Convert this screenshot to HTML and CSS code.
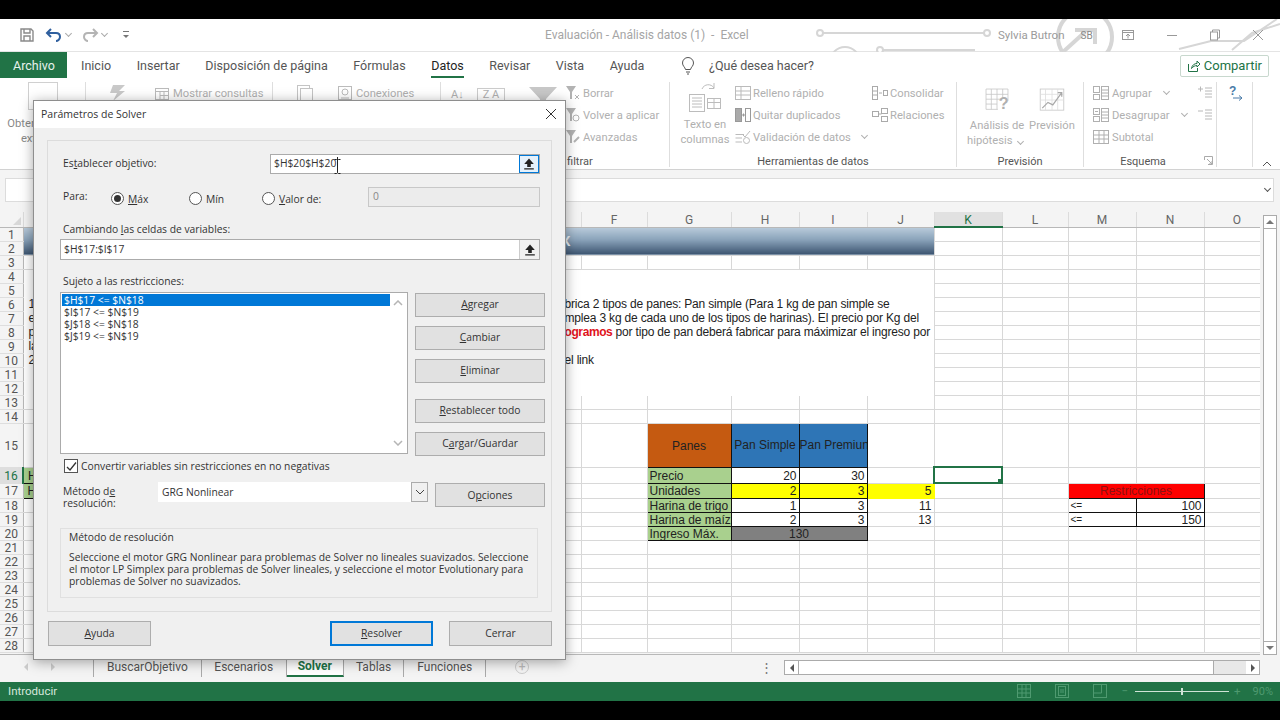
FILE: index.html
```html
<!DOCTYPE html>
<html lang="es">
<head>
    <meta charset="UTF-8">
    <meta name="viewport" content="width=device-width, initial-scale=1.0">
    <title>Evaluación - Análisis datos (1) - Excel</title>
    <link rel="stylesheet" href="styles.css">
</head>
<body>

<div class="page">
    <div class="letterbox-top"></div>

    <!-- Title bar -->
    <header class="titlebar">
        <svg class="circuit" width="465" height="33" viewBox="815 19 465 33" fill="none" stroke="#d6d6d6" stroke-width="2">
            <path d="M820 33H985"/><circle cx="820" cy="33" r="3" fill="#fff"/><circle cx="987" cy="33" r="3" fill="#fff"/>
            <path d="M880 50H975"/><circle cx="880" cy="50" r="3" fill="#fff"/>
            <circle cx="845" cy="62" r="15"/>
            <circle cx="1085" cy="37" r="27" stroke-width="4"/>
            <path d="M1063 52L1085 32M1075 30H1095V44" stroke-width="4"/>
            <path d="M1179 49L1211 41H1244L1277 19M1232 50L1252 33L1280 24"/>
        </svg>
        <div class="qat">
            <svg width="16" height="16" viewBox="0 0 16 16" fill="none" stroke="#8a8a8a" stroke-width="1.4"><path d="M2 2H12L14 4V14H2Z"/><path d="M5 2V6H11V2M5 14V9H11V14"/></svg>
            <svg class="qat-undo" width="18" height="16" viewBox="0 0 18 16" fill="none" stroke="#2f5f9e" stroke-width="2"><path d="M6 2L2 6L6 10M2 6H11C14 6 15 8 15 10C15 12 13 14 11 14"/></svg>
            <span class="chev qat-drop"></span>
            <svg class="qat-redo" width="18" height="16" viewBox="0 0 18 16" fill="none" stroke="#b4b4b4" stroke-width="2"><path d="M12 2L16 6L12 10M16 6H7C4 6 3 8 3 10C3 12 5 14 7 14"/></svg>
            <span class="chev qat-drop"></span>
            <svg class="qat-custom" width="8" height="10" viewBox="0 0 8 10" fill="#777"><rect x="1" y="1" width="6" height="1"/><path d="M1 5H7L4 8Z"/></svg>
        </div>
        <div class="doc-title">Evaluación - Análisis datos (1)  -  Excel</div>
        <div class="account">
            <span class="account-name">Sylvia Butron</span>
            <span class="account-badge">SB</span>
        </div>
        <div class="window-btns">
            <svg width="14" height="12" viewBox="0 0 14 12" fill="none" stroke="#999"><rect x="1.5" y="1.5" width="11" height="9"/><path d="M1.5 3.5H12.5M7 9.5V5.5M5 7L7 5L9 7"/></svg>
            <svg width="12" height="12" viewBox="0 0 12 12" stroke="#999"><path d="M1 6.5H11"/></svg>
            <svg width="12" height="12" viewBox="0 0 12 12" fill="none" stroke="#999"><rect x="1.5" y="3" width="7" height="8"/><path d="M3.5 3V1H10.5V9H8.5"/></svg>
            <svg width="12" height="12" viewBox="0 0 12 12" stroke="#999"><path d="M1 1L11 11M11 1L1 11"/></svg>
        </div>
    </header>

    <!-- Ribbon tabs -->
    <nav class="tabs">
        <span class="tab-file">Archivo</span>
        <span class="tab">Inicio</span>
        <span class="tab">Insertar</span>
        <span class="tab">Disposición de página</span>
        <span class="tab">Fórmulas</span>
        <span class="tab tab-active">Datos</span>
        <span class="tab">Revisar</span>
        <span class="tab">Vista</span>
        <span class="tab">Ayuda</span>
        <svg class="tab-bulb" width="14" height="18" viewBox="0 0 14 18" fill="none" stroke="#555"><path d="M4.5 12.5C4 10 1.5 9 1.5 6A5.5 5.5 0 0 1 12.5 6C12.5 9 10 10 9.5 12.5ZM5 15H9M6 17H8"/></svg>
        <span class="tab-search">¿Qué desea hacer?</span>
        <span class="share">
            <svg width="14" height="14" viewBox="0 0 14 14" fill="none" stroke="#217346"><path d="M1.5 5V12.5H10.5V9M4.5 9.5C5 6 7.5 4.5 10 4.5V2L13 5L10 8V6.5C8 6.5 6 7.5 4.5 9.5Z"/></svg>
            Compartir
        </span>
    </nav>

    <!-- Ribbon -->
    <section class="ribbon">
        <div class="group g-get">
            <div class="group-body">
                <div class="big-btn">
                    <span class="get-icon"></span>
                    <span>Obtener datos</span>
                    <span>externos</span>
                </div>
            </div>
        </div>
        <div class="group g-queries">
            <div class="group-body top-row">
                <svg class="ico" width="24" height="16" viewBox="0 0 24 16" fill="#c9c9c9"><path d="M6 0H18L12 6H18L6 16L10 8H3Z"/></svg>
                <svg class="ico" width="14" height="14" viewBox="0 0 14 14" fill="none" stroke="#bbb"><rect x="0.5" y="1.5" width="13" height="11"/><path d="M0.5 4.5H13.5M5 4.5V12.5M9 4.5V12.5M5 8.5H13.5"/></svg>
                <span>Mostrar consultas</span>
            </div>
        </div>
        <div class="group g-links">
            <div class="group-body top-row">
                <svg class="ico" width="18" height="16" viewBox="0 0 18 16" fill="none" stroke="#c4c4c4"><rect x="1.5" y="0.5" width="12" height="15"/><rect x="4.5" y="3.5" width="12" height="12" fill="#fff"/></svg>
                <svg class="ico" width="14" height="14" viewBox="0 0 14 14" fill="none" stroke="#bbb"><rect x="0.5" y="0.5" width="13" height="13"/><circle cx="7" cy="6" r="3"/><path d="M3 12H11"/></svg>
                <span>Conexiones</span>
            </div>
        </div>
        <div class="group g-sort">
            <div class="group-body sort-body">
                <div class="sort-keys">
                    <span class="sort-a">A↓</span>
                    <span class="sort-za">Z A</span>
                </div>
                <svg class="funnel" width="28" height="26" viewBox="0 0 28 26" fill="#c8c8c8"><path d="M0 0H28L17 12V26H11V12Z"/></svg>
                <div class="stack">
                    <div class="stack-row"><svg width="14" height="14" viewBox="0 0 14 14" fill="#b3b3b3"><path d="M0 0H10L6 6V13H4V6Z"/><path d="M9 9L13 13M13 9L9 13" stroke="#b3b3b3"/></svg>Borrar</div>
                    <div class="stack-row"><svg width="14" height="14" viewBox="0 0 14 14" fill="#b3b3b3"><path d="M0 0H10L6 6V13H4V6Z"/><circle cx="10" cy="10" r="3" fill="none" stroke="#b3b3b3"/></svg>Volver a aplicar</div>
                    <div class="stack-row"><svg width="14" height="14" viewBox="0 0 14 14" fill="#b3b3b3"><path d="M0 0H10L6 6V13H4V6Z"/><path d="M8 12L13 7" stroke="#b3b3b3" stroke-width="2"/></svg>Avanzadas</div>
                </div>
            </div>
            <div class="group-label">Ordenar y filtrar</div>
        </div>
        <div class="group g-tools">
            <div class="group-body tools-body">
                <div class="big-btn big-text">
                    <svg width="34" height="32" viewBox="0 0 34 32" fill="none" stroke="#bcbcbc"><path d="M14 7C16 2 23 1 26 6M26 1V6.5H21"/><rect x="1.5" y="12.5" width="15" height="17"/><path d="M4 16H14M4 19H14M4 22H14M4 25H14"/><rect x="19.5" y="16.5" width="13" height="10"/><path d="M19.5 20.5H32.5M26 16.5V26.5"/></svg>
                    <span>Texto en</span>
                    <span>columnas</span>
                </div>
                <div class="stack stack-tools">
                    <div class="stack-row"><svg width="16" height="14" viewBox="0 0 16 14" fill="none" stroke="#bbb"><rect x="0.5" y="0.5" width="15" height="13"/><path d="M0.5 5H15.5M0.5 9H15.5M6 0.5V13.5"/></svg>Relleno rápido</div>
                    <div class="stack-row"><svg width="16" height="14" viewBox="0 0 16 14" fill="none" stroke="#999"><rect x="0.5" y="0.5" width="6" height="13" fill="#aaa"/><rect x="10.5" y="0.5" width="5" height="13"/><path d="M7 7H10M8.5 5.5V8.5"/></svg>Quitar duplicados</div>
                    <div class="stack-row"><svg width="16" height="14" viewBox="0 0 16 14" fill="none" stroke="#bbb"><path d="M0.5 4.5H9M0.5 8H7M0.5 12H7M8 5L10 7L15 1"/><circle cx="11.5" cy="10.5" r="3"/></svg>Validación de datos<span class="chev"></span></div>
                </div>
                <div class="stack stack-links">
                    <div class="stack-row"><svg width="16" height="14" viewBox="0 0 16 14" fill="none" stroke="#aaa"><rect x="0.5" y="0.5" width="5" height="13"/><path d="M0.5 5H5.5M0.5 9H5.5M7 7H10"/><rect x="11.5" y="4.5" width="4" height="5"/></svg>Consolidar</div>
                    <div class="stack-row"><svg width="16" height="14" viewBox="0 0 16 14" fill="none" stroke="#aaa"><rect x="0.5" y="3.5" width="6" height="5"/><rect x="9.5" y="0.5" width="6" height="5"/><rect x="9.5" y="8.5" width="6" height="5"/><path d="M6.5 6H9.5"/></svg>Relaciones</div>
                </div>
            </div>
            <div class="group-label">Herramientas de datos</div>
        </div>
        <div class="group g-forecast">
            <div class="group-body forecast-body">
                <div class="big-btn big-whatif">
                    <svg viewBox="0 0 32 32" fill="none" stroke="#c6c6c6"><path d="M2.5 2.5H29.5V17M2.5 2.5V27.5H17M2.5 9H29.5M2.5 15H22M2.5 21H16M9 2.5V27.5M16 2.5V27.5M23 2.5V13"/><text class="whatif-mark" x="18" y="27">?</text></svg>
                    <span>Análisis de</span>
                    <span class="big-second">hipótesis<span class="chev"></span></span>
                </div>
                <div class="big-btn big-fc">
                    <svg viewBox="0 0 32 32" fill="none" stroke="#c6c6c6"><rect x="1.5" y="2.5" width="29" height="26"/><path d="M1.5 9H30.5M8 2.5V28.5M16 2.5V28.5M23 2.5V28.5M1.5 16H30.5" stroke="#dedede"/><path d="M4 26L11 19L17 22L28 7M23 7H28V12" stroke="#a8a8a8" stroke-width="1.5"/></svg>
                    <span>Previsión</span>
                </div>
            </div>
            <div class="group-label">Previsión</div>
        </div>
        <div class="group g-outline">
            <div class="group-body outline-body">
                <div class="stack">
                    <div class="stack-row"><svg width="16" height="14" viewBox="0 0 16 14" fill="none" stroke="#b0b0b0"><rect x="0.5" y="0.5" width="6" height="6"/><rect x="0.5" y="8.5" width="6" height="5"/><rect x="8.5" y="0.5" width="7" height="13"/><path d="M8.5 4H15.5M8.5 7H15.5M8.5 10H15.5"/></svg>Agrupar<span class="chev"></span></div>
                    <div class="stack-row"><svg width="16" height="14" viewBox="0 0 16 14" fill="none" stroke="#b0b0b0"><rect x="0.5" y="0.5" width="6" height="6"/><rect x="0.5" y="8.5" width="6" height="5"/><rect x="8.5" y="0.5" width="7" height="13"/><path d="M8.5 4H15.5M8.5 7H15.5M8.5 10H15.5M2 3.5H5"/></svg>Desagrupar<span class="chev"></span></div>
                    <div class="stack-row"><svg width="16" height="14" viewBox="0 0 16 14" fill="none" stroke="#b0b0b0"><rect x="0.5" y="0.5" width="15" height="13"/><path d="M0.5 5H15.5M0.5 9H15.5M6 0.5V13.5M11 0.5V13.5"/></svg>Subtotal</div>
                </div>
                <div class="detail-btns">
                    <svg width="16" height="14" viewBox="0 0 16 14" fill="none" stroke="#b8b8b8"><path d="M1 3H6M3.5 0.5V5.5M8 2H15M8 5H15M8 8H15M8 11H15"/></svg>
                    <svg width="16" height="14" viewBox="0 0 16 14" fill="none" stroke="#b8b8b8"><path d="M1 3H6M8 2H15M8 5H15M8 8H15M8 11H15"/></svg>
                </div>
            </div>
            <div class="group-label group-label-launcher">Esquema
                <svg class="launcher" width="9" height="9" viewBox="0 0 9 9" fill="none" stroke="#aaa"><path d="M0.5 4V0.5H8.5V8.5H4M3 3L8 8M8 5V8H5"/></svg>
            </div>
        </div>
        <div class="group g-solver">
            <div class="group-body solver-body">
                <svg width="16" height="18" viewBox="0 0 16 18"><text class="solver-mark" x="1" y="11">?</text><path d="M5 14H14M11 11.5L14 14L11 16.5" fill="none" stroke="#4a7ba8"/></svg>
            </div>
        </div>
        <svg class="collapse" width="10" height="6" viewBox="0 0 10 6" fill="none" stroke="#555"><path d="M1 5L5 1L9 5"/></svg>
    </section>

    <!-- Formula bar -->
    <div class="formula-strip">
        <div class="formula-input"><span class="chev formula-chev"></span></div>
    </div>

    <!-- Worksheet, rows are filled in by script.js -->
    <main class="sheet-wrap">
        <div class="sheet">
            <table class="grid" id="grid">
                <colgroup>
                    <col class="col-rowhead">
                    <col class="col-a"><col class="col-b"><col class="col-c"><col class="col-d"><col class="col-e">
                    <col class="col-f"><col class="col-g"><col class="col-h"><col class="col-i"><col class="col-j">
                    <col class="col-k"><col class="col-l"><col class="col-m"><col class="col-n"><col class="col-o">
                </colgroup>
                <tbody id="grid-body"></tbody>
            </table>
        </div>
        <div class="vscroll">
            <span class="vs-btn"><i class="tri-up"></i></span>
            <span class="vs-thumb"></span>
            <span class="vs-btn"><i class="tri-down"></i></span>
        </div>
    </main>

    <!-- Sheet tabs -->
    <div class="sheetbar">
        <div class="sheet-nav"><i class="tri-left"></i><i class="tri-right"></i></div>
        <div class="sheet-tabs">
            <span class="sheet-tab">BuscarObjetivo</span>
            <span class="sheet-tab">Escenarios</span>
            <span class="sheet-tab sheet-tab-active">Solver</span>
            <span class="sheet-tab">Tablas</span>
            <span class="sheet-tab">Funciones</span>
        </div>
        <span class="sheet-add">+</span>
        <span class="sheet-dots">⋮</span>
        <div class="hscroll">
            <span class="hs-btn"><i class="tri-left dark"></i></span>
            <span class="hs-thumb"></span>
            <span class="hs-track"></span>
            <span class="hs-btn"><i class="tri-right dark"></i></span>
        </div>
    </div>

    <!-- Status bar -->
    <footer class="statusbar">
        <span>Introducir</span>
        <div class="status-right">
            <svg width="14" height="14" viewBox="0 0 14 14" fill="none" stroke="#4f9a70"><rect x="0.5" y="0.5" width="13" height="13"/><path d="M0.5 5H13.5M0.5 9H13.5M5 0.5V13.5M9 0.5V13.5"/></svg>
            <svg width="14" height="14" viewBox="0 0 14 14" fill="none" stroke="#4f9a70"><rect x="0.5" y="0.5" width="13" height="13"/><rect x="3.5" y="2.5" width="7" height="9"/><path d="M5 6H9M5 8H9"/></svg>
            <svg width="14" height="14" viewBox="0 0 14 14" fill="none" stroke="#4f9a70"><rect x="0.5" y="0.5" width="13" height="13"/><path d="M0.5 9H8.5V0.5"/></svg>
            <span class="zoom-minus">−</span>
            <span class="zoom-slider"><i></i></span>
            <span class="zoom-plus">+</span>
            <span class="zoom-level">90%</span>
        </div>
    </footer>

    <div class="letterbox-bottom"></div>

    <!-- Solver dialog -->
    <div class="dialog">
        <div class="dialog-title">
            <span>Parámetros de Solver</span>
            <svg width="12" height="12" viewBox="0 0 12 12" stroke="#333"><path d="M1 1L11 11M11 1L1 11"/></svg>
        </div>
        <div class="panel">
            <div class="row-objective">
                <label class="lbl lbl-objective">Es<u>t</u>ablecer objetivo:</label>
                <div class="ref-input ref-objective">
                    <span class="ref-text">$H$20$H$20<i class="caret"></i></span>
                    <span class="ref-btn ref-btn-focus">
                        <svg viewBox="0 0 10 10" fill="#222"><path d="M5 0.5L9 5H6.5V7.5H3.5V5H1ZM1 8.5H9V9.5H1Z"/></svg>
                    </span>
                </div>
            </div>
            <div class="row-para">
                <label class="lbl lbl-para">Para:</label>
                <label class="radio radio-max"><span class="radio-dot checked"></span><span><u>M</u>áx</span></label>
                <label class="radio radio-min"><span class="radio-dot"></span><span>Mín</span></label>
                <label class="radio radio-val"><span class="radio-dot"></span><span><u>V</u>alor de:</span></label>
                <div class="value-input">0</div>
            </div>
            <label class="lbl lbl-block lbl-vars">Cambiando <u>l</u>as celdas de variables:</label>
            <div class="ref-input ref-vars">
                <span class="ref-text">$H$17:$I$17</span>
                <span class="ref-btn">
                    <svg viewBox="0 0 10 10" fill="#222"><path d="M5 0.5L9 5H6.5V7.5H3.5V5H1ZM1 8.5H9V9.5H1Z"/></svg>
                </span>
            </div>
            <label class="lbl lbl-block lbl-subject">Su<u>j</u>eto a las restricciones:</label>
            <div class="row-constraints">
                <div class="listbox">
                    <ul class="list-items">
                        <li class="selected">$H$17 &lt;= $N$18</li>
                        <li>$I$17 &lt;= $N$19</li>
                        <li>$J$18 &lt;= $N$18</li>
                        <li>$J$19 &lt;= $N$19</li>
                    </ul>
                    <div class="list-scroll">
                        <svg width="10" height="6" viewBox="0 0 10 6" fill="none" stroke="#b5b5b5" stroke-width="1.5"><path d="M1 5L5 1L9 5"/></svg>
                        <svg width="10" height="6" viewBox="0 0 10 6" fill="none" stroke="#b5b5b5" stroke-width="1.5"><path d="M1 1L5 5L9 1"/></svg>
                    </div>
                </div>
                <div class="side-btns">
                    <button class="btn"><u>A</u>gregar</button>
                    <button class="btn"><u>C</u>ambiar</button>
                    <button class="btn"><u>E</u>liminar</button>
                    <button class="btn btn-gap"><u>R</u>establecer todo</button>
                    <button class="btn">C<u>a</u>rgar/Guardar</button>
                </div>
            </div>
            <label class="check-row">
                <span class="checkbox">
                    <svg width="11" height="11" viewBox="0 0 11 11" fill="none" stroke="#333" stroke-width="1.3"><path d="M1 6L4 9L10 1.5"/></svg>
                </span>
                Convertir variables sin restricciones en no negativas
            </label>
            <div class="row-method">
                <label class="lbl lbl-method">Método d<u>e</u><br>resolución:</label>
                <div class="select">
                    <span>GRG Nonlinear</span>
                    <span class="select-btn">
                        <svg width="10" height="6" viewBox="0 0 10 6" fill="none" stroke="#444"><path d="M1 1L5 5L9 1"/></svg>
                    </span>
                </div>
                <button class="btn btn-options">O<u>p</u>ciones</button>
            </div>
            <div class="method-box">
                <div class="method-title">Método de resolución</div>
                <p class="method-text">Seleccione el motor GRG Nonlinear para problemas de Solver no lineales suavizados. Seleccione el motor LP Simplex para problemas de Solver lineales, y seleccione el motor Evolutionary para problemas de Solver no suavizados.</p>
            </div>
        </div>
        <div class="dialog-footer">
            <button class="btn btn-foot"><u>A</u>yuda</button>
            <button class="btn btn-foot btn-default"><u>R</u>esolver</button>
            <button class="btn btn-foot">Cerrar</button>
        </div>
        <svg class="ibeam" width="7" height="15" viewBox="0 0 7 15" fill="none" stroke="#222"><path d="M0.5 0.5H2.5L3.5 1.5L4.5 0.5H6.5M3.5 1.5V13.5M0.5 14.5H2.5L3.5 13.5L4.5 14.5H6.5"/></svg>
    </div>
</div>

<script src="script.js"></script>
</body>
</html>
```

FILE: styles.css
```css
* {
    box-sizing: border-box;
}

body {
    margin: 0;
    background-color: #000;
    font-family: Roboto, "Liberation Sans", sans-serif;
    color: #444;
}

button {
    font: inherit;
}

.page {
    position: relative;
    display: flex;
    flex-direction: column;
    width: 1280px;
    height: 720px;
    overflow: hidden;
}

.letterbox-top {
    height: 19px;
    background-color: #000;
}

.letterbox-bottom {
    flex: 1;
    background-color: #000;
}

.chev {
    display: inline-block;
    width: 5px;
    height: 5px;
    margin: -3px 0 0 9px;
    border-right: 1px solid currentColor;
    border-bottom: 1px solid currentColor;
    transform: rotate(45deg);
}

/* Title bar */
.titlebar {
    position: relative;
    display: flex;
    align-items: center;
    height: 33px;
    padding-left: 19px;
    background-color: #fff;
    border-bottom: 1px solid #e4e4e4;
    font-size: 12px;
}

.circuit {
    position: absolute;
    top: 0;
    left: 815px;
}

.qat {
    position: relative;
    display: flex;
    align-items: center;
    width: 526px;
}

.qat-undo {
    margin-left: 10px;
}

.qat-drop {
    margin: -3px 0 0 3px;
    color: #aaa;
}

.qat-redo {
    margin-left: 10px;
}

.qat-custom {
    margin-left: 15px;
}

.doc-title {
    position: relative;
    width: 453px;
    color: #a5a5a5;
    white-space: pre;
}

.account {
    position: relative;
    display: flex;
    align-items: center;
    width: 123px;
    color: #9b9b9b;
}

.account-name {
    font-size: 11.5px;
}

.account-badge {
    margin-left: 16px;
    color: #888;
    font-size: 10px;
}

.window-btns {
    position: relative;
    display: flex;
    align-items: center;
    gap: 31px;
}

/* Ribbon tabs */
.tabs {
    display: flex;
    align-items: center;
    height: 26px;
    padding-top: 1px;
    background-color: #fff;
    font-size: 12.5px;
    color: #555;
}

.tab-file {
    display: flex;
    align-items: center;
    align-self: stretch;
    width: 67px;
    margin-top: -1px;
    padding-left: 13px;
    background-color: #217346;
    color: #e8f2ec;
}

.tab {
    position: relative;
    padding: 0 12.8px;
}

.tab:nth-child(2) {
    padding-left: 14px;
}

.tab-active {
    color: #222;
}

.tab-active::after {
    content: '';
    position: absolute;
    left: 13px;
    right: 13px;
    bottom: -6px;
    height: 3px;
    background-color: #217346;
}

.tab-bulb {
    margin-left: 24px;
}

.tab-search {
    margin-left: 14px;
}

.share {
    display: flex;
    align-items: center;
    gap: 3px;
    margin-left: auto;
    margin-right: 11px;
    height: 22px;
    padding: 0 6px;
    border: 1px solid #c8d8ce;
    border-radius: 2px;
    color: #217346;
    font-size: 13px;
}

/* Ribbon */
.ribbon {
    position: relative;
    display: flex;
    height: 92px;
    padding-top: 4px;
    background-color: #fff;
    border-bottom: 1px solid #d2d2d2;
    font-size: 11.2px;
    color: #b0b0b0;
}

.group {
    display: flex;
    flex-direction: column;
    border-right: 1px solid #dedede;
    height: 85px;
}

.g-get { width: 86px; color: #888; }
.g-queries { width: 187px; }
.g-links { width: 168px; }
.g-sort { width: 229px; }
.g-tools { width: 287px; }
.g-forecast { width: 127px; }
.g-outline { width: 133px; }
.g-solver { width: 36px; }

.group-body {
    display: flex;
    flex: none;
    height: 71px;
}

.group-label {
    height: 14px;
    line-height: 18px;
    text-align: center;
    color: #555;
    font-size: 11px;
}

.group-label-launcher {
    position: relative;
    padding-right: 14px;
}

.launcher {
    position: absolute;
    top: 3px;
    right: 3px;
}

.big-btn {
    display: flex;
    flex-direction: column;
    align-items: center;
    line-height: 15px;
}

.g-get .big-btn {
    width: 100%;
}

.get-icon {
    width: 30px;
    height: 28px;
    margin-bottom: 6px;
    border: 1px solid #d0d0d0;
}

.top-row {
    align-items: flex-start;
    padding-top: 3px;
}

.top-row > span {
    margin-top: 2px;
}

.top-row .ico {
    flex: none;
}

.g-queries .top-row svg:first-child {
    margin-left: 21px;
}

.g-queries .top-row svg:nth-child(2) {
    margin: 2px 4px 0 24px;
}

.g-links .top-row svg:first-child {
    margin-left: 23px;
}

.g-links .top-row svg:nth-child(2) {
    margin: 1px 4px 0 24px;
}

/* Sort and filter */
.sort-body {
    padding-left: 10px;
}

.sort-keys {
    display: flex;
    width: 78px;
    padding-top: 6px;
}

.sort-a {
    width: 26px;
    font-size: 11px;
}

.sort-za {
    width: 28px;
    height: 13px;
    border: 1px solid #ccc;
    font-size: 11px;
    line-height: 11px;
    text-align: center;
}

.funnel {
    margin-top: 5px;
}

.stack {
    display: flex;
    flex-direction: column;
    gap: 0;
}

.stack-row {
    display: flex;
    align-items: center;
    gap: 3px;
    height: 22px;
    white-space: nowrap;
}

.g-sort .stack {
    margin-left: 9px;
}

/* Data tools */
.tools-body {
    padding-left: 10px;
}

.big-text {
    width: 50px;
    margin-right: 5px;
}

.big-text svg {
    margin-bottom: 3px;
}

.stack-tools {
    flex: none;
    width: 137px;
}

.stack-tools .stack-row,
.stack-links .stack-row {
    gap: 2px;
}

.forecast-body {
    padding-left: 10px;
}

.big-whatif {
    width: 60px;
}

.big-second {
    align-self: flex-start;
}

.big-second .chev {
    margin-left: 6px;
}

.big-whatif svg,
.big-fc svg {
    width: 26px;
    height: 26px;
    margin: 5px 0;
}

.whatif-mark {
    fill: #b0b0b0;
    stroke: none;
    font: bold 20px "Liberation Sans", sans-serif;
}

.big-fc {
    width: 46px;
    margin-left: 2px;
}

.outline-body {
    padding-left: 9px;
}

.g-outline .stack {
    width: 104px;
}

.detail-btns {
    display: flex;
    flex-direction: column;
    gap: 8px;
    padding-top: 4px;
}

.solver-body {
    padding: 2px 0 0 11px;
}

.solver-mark {
    fill: #4a7ba8;
    font: bold 12px "Liberation Sans", sans-serif;
}

.collapse {
    position: absolute;
    top: 83px;
    right: 8px;
}

/* Formula bar */
.formula-strip {
    height: 42px;
    padding: 8px 6px 9px 5px;
    background-color: #f4f4f4;
}

.formula-input {
    display: flex;
    align-items: center;
    justify-content: flex-end;
    height: 24px;
    padding-right: 3px;
    background-color: #fff;
    border: 1px solid #dcdcdc;
    color: #555;
}

/* Worksheet */
.sheet-wrap {
    display: flex;
    height: 443px;
    background-color: #f4f4f4;
}

.sheet {
    width: 1260px;
    height: 100%;
    overflow: hidden;
    border-bottom: 1px solid #b8b8b8;
}

.grid {
    table-layout: fixed;
    width: 1270px;
    border-collapse: collapse;
    background-color: #fff;
    font-family: "Liberation Sans", Arial, sans-serif;
    font-size: 12px;
    color: #222;
}

.col-rowhead { width: 23px; }
.col-a { width: 120px; }
.col-b { width: 110px; }
.col-c { width: 110px; }
.col-d { width: 110px; }
.col-e { width: 108px; }
.col-f { width: 66px; }
.col-g { width: 84px; }
.col-h { width: 68px; }
.col-i { width: 68px; }
.col-j { width: 67px; }
.col-k { width: 68px; }
.col-l { width: 66px; }
.col-m { width: 68px; }
.col-n { width: 68px; }
.col-o { width: 66px; }

.grid td,
.grid th {
    height: 14px;
    padding: 1px 2px 0;
    overflow: hidden;
    white-space: nowrap;
    line-height: 12px;
    font-weight: normal;
}

.grid td {
    border: 1px solid #d8d8d8;
}

.grid th.col-head {
    height: 15px;
    padding-top: 2px;
    background-color: #f4f4f4;
    border: 0;
    border-right: 1px solid #dcdcdc;
    border-bottom: 1px solid #b8b8b8;
    font-family: Roboto, sans-serif;
    text-align: center;
    color: #666;
    font-size: 12px;
}

.grid th.col-head-active {
    background-color: #e1e1e1;
    border-bottom: 2px solid #217346;
    color: #217346;
}

.corner {
    position: relative;
}

.corner::after {
    content: '';
    position: absolute;
    right: 2px;
    bottom: 2px;
    border-style: solid;
    border-width: 0 0 8px 8px;
    border-color: transparent transparent #d8d8d8 transparent;
}

.grid th.row-head {
    padding: 1px 0 0;
    background-color: #f4f4f4;
    border-bottom: 1px solid #dedede;
    border-right: 1px solid #b8b8b8;
    font-family: Roboto, sans-serif;
    color: #555;
    text-align: center;
    font-size: 12px;
}

.grid th.row-head-active {
    background-color: #dedede;
    border-right: 2px solid #217346;
    color: #217346;
}

.row-15 td, .row-15 th { height: 44px; }
.row-16 td, .row-16 th { height: 16px; }
.row-17 td, .row-17 th { height: 15px; }

.grid td.banner {
    padding: 0;
    border: 0;
    background: linear-gradient(#b9cbdb, #8aa3ba 45%, #3c5470);
}

.banner-text {
    display: block;
    padding-left: 537px;
    color: #e6edf3;
    font-size: 15px;
    font-weight: bold;
}

.grid td.note {
    padding: 0 0 0 5px;
    border-top-color: transparent;
    border-bottom-color: transparent;
    border-left: 0;
    letter-spacing: -0.18px;
}

.note-row {
    display: flex;
}

.note-frag {
    width: 536px;
    flex: none;
}

.note-red {
    color: #e0141c;
    font-weight: bold;
    letter-spacing: -0.4px;
}

.grid td.c-panes,
.grid td.c-h-blue,
.grid td.c-label,
.grid td.c-in,
.grid td.c-yellow,
.grid td.c-gray,
.grid td.c-red {
    border: 1px solid #111;
}

.grid td.c-panes {
    background-color: #c55a11;
    text-align: center;
}

.grid td.c-h-blue {
    padding: 0;
    background-color: #2e75b6;
    text-align: center;
}

.grid td.c-label {
    background-color: #a9d08e;
    text-align: left;
}

.grid td.c-edge {
    padding-left: 4px;
}

.grid td.c-yellow {
    background-color: #ffff00;
    text-align: right;
}

.grid td.c-in,
.grid td.c-num {
    text-align: right;
}

.grid td.c-sign {
    text-align: left;
    font-size: 10px;
}

.grid td.c-plain-yellow {
    background-color: #ffff00;
    border-color: #ffff00;
    text-align: right;
}

.grid td.c-gray {
    background-color: #808080;
    text-align: center;
}

.grid td.c-red {
    background-color: #ff0000;
    color: #8c1010;
    text-align: center;
}

.grid td.active {
    position: relative;
    outline: 2px solid #217346;
    outline-offset: -1px;
}

.grid td.active::after {
    content: '';
    position: absolute;
    right: -1px;
    bottom: -1px;
    width: 5px;
    height: 5px;
    background-color: #217346;
}

.vscroll {
    display: flex;
    flex-direction: column;
    width: 14px;
    margin: 3px 0 0 3px;
}

.vs-btn {
    display: flex;
    align-items: center;
    justify-content: center;
    height: 14px;
    background-color: #fff;
    border: 1px solid #ababab;
}

.vs-thumb {
    flex: 1;
    background-color: #fff;
    border-left: 1px solid #ababab;
    border-right: 1px solid #ababab;
}

.tri-up, .tri-down, .tri-left, .tri-right {
    display: inline-block;
    border-style: solid;
}

.tri-up {
    border-width: 0 4px 4px;
    border-color: transparent transparent #777;
}

.tri-down {
    border-width: 4px 4px 0;
    border-color: #777 transparent transparent;
}

.tri-left {
    border-width: 4px 4px 4px 0;
    border-color: transparent #ccc transparent transparent;
}

.tri-right {
    border-width: 4px 0 4px 4px;
    border-color: transparent transparent transparent #ccc;
}

.tri-left.dark {
    border-right-color: #555;
}

.tri-right.dark {
    border-left-color: #555;
}

/* Sheet tabs */
.sheetbar {
    display: flex;
    align-items: center;
    height: 27px;
    padding-bottom: 3px;
    background-color: #f4f4f4;
    color: #555;
}

.sheet-nav {
    display: flex;
    gap: 23px;
    width: 93px;
    padding-left: 24px;
}

.sheet-tabs {
    display: flex;
    height: 19px;
    border-left: 1px solid #aaa;
    font-size: 12px;
}

.sheet-tab {
    display: flex;
    align-items: center;
    padding: 0 13px;
    border-right: 1px solid #aaa;
}

.sheet-tab:nth-child(2) {
    padding: 0 12.5px;
}

.sheet-tab-active {
    padding: 0 11px;
    background-color: #fff;
    border-bottom: 2px solid #217346;
    color: #217346;
    font-weight: bold;
}

.sheet-tab:nth-child(4) {
    padding: 0 12px;
}

.sheet-add {
    display: flex;
    align-items: center;
    justify-content: center;
    width: 14px;
    height: 14px;
    margin-left: 29px;
    border: 1px solid #ccc;
    border-radius: 50%;
    color: #bbb;
    font-size: 12px;
}

.sheet-dots {
    width: 16px;
    margin-left: auto;
    color: #777;
    font-size: 13px;
}

.hscroll {
    display: flex;
    width: 476px;
    height: 15px;
    margin: 1px 20px 0 8px;
    border: 1px solid #ababab;
    background-color: #e8e8e8;
}

.hs-btn {
    display: flex;
    align-items: center;
    justify-content: center;
    width: 13px;
    background-color: #fff;
}

.hs-thumb {
    width: 416px;
    background-color: #fff;
    border-left: 1px solid #ababab;
    border-right: 1px solid #ababab;
}

.hs-track {
    flex: 1;
}

/* Status bar */
.statusbar {
    display: flex;
    align-items: center;
    justify-content: space-between;
    height: 19px;
    padding: 0 7px 1px 8px;
    background-color: #217346;
    color: #d6e8dd;
    font-size: 11.5px;
}

.status-right {
    display: flex;
    align-items: center;
    gap: 24px;
    color: #4f9a70;
}

.zoom-minus {
    margin-left: -10px;
}

.zoom-slider {
    position: relative;
    width: 94px;
    height: 1px;
    margin: 0 -19px 0 -17px;
    background-color: #cfe3d6;
}

.zoom-slider i {
    position: absolute;
    top: -3px;
    left: 46px;
    width: 2px;
    height: 7px;
    background-color: #cfe3d6;
}

.zoom-level {
    margin-left: -12px;
    font-size: 11px;
}

/* Solver dialog */
.dialog {
    position: absolute;
    top: 100px;
    left: 33px;
    width: 533px;
    height: 560px;
    background-color: #f0f0f0;
    border: 1px solid #8e8e8e;
    box-shadow: 0 2px 12px rgba(0, 0, 0, 0.35);
    font-family: "Open Sans", "Liberation Sans", sans-serif;
    font-size: 10.3px;
    color: #333;
}

.dialog-title {
    display: flex;
    align-items: center;
    justify-content: space-between;
    height: 27px;
    padding: 0 8px 2px 7px;
    background-color: #fff;
    font-size: 10.5px;
}

.panel {
    width: 505px;
    height: 472px;
    margin: 12px 0 0 13px;
    padding: 13px 6px 0 12px;
    border: 1px solid #dcdcdc;
}

.lbl {
    display: block;
    padding-left: 3px;
    line-height: 14px;
}

.row-objective {
    display: flex;
    align-items: center;
    height: 20px;
}

.lbl-objective {
    width: 210px;
    margin-bottom: 2px;
}

.ref-input {
    display: flex;
    justify-content: space-between;
    background-color: #fff;
    border: 1px solid #ababab;
    width: 480px;
    height: 21px;
}

.ref-objective {
    width: 270px;
    height: 20px;
}

.ref-text {
    position: relative;
    padding-left: 3px;
    line-height: 17px;
}

.caret {
    display: inline-block;
    width: 1px;
    height: 13px;
    margin-left: 1px;
    vertical-align: -3px;
    background-color: #222;
}

.ref-btn {
    display: flex;
    align-items: center;
    justify-content: center;
    width: 20px;
    background-color: #f0f0f0;
    border-left: 1px solid #ccc;
}

.ref-btn svg {
    width: 12px;
    height: 12px;
}

.ref-btn-focus {
    background-color: #e5f1fb;
    border: 1px solid #0078d7;
}

.ibeam {
    position: absolute;
    top: 58px;
    left: 300px;
}

.row-para {
    display: flex;
    align-items: center;
    height: 20px;
    margin-top: 13px;
}

.lbl-para {
    width: 46px;
    margin-bottom: 2px;
}

.radio {
    display: flex;
    align-items: center;
    gap: 4px;
    margin-top: 3px;
}

.radio-dot {
    position: relative;
    width: 13px;
    height: 13px;
    border: 1px solid #555;
    border-radius: 50%;
    background-color: #fff;
}

.radio-dot.checked::after {
    content: '';
    position: absolute;
    top: 2px;
    left: 2px;
    width: 7px;
    height: 7px;
    border-radius: 50%;
    background-color: #333;
}

.radio-max { width: 78px; margin-left: 5px; }
.radio-min { width: 73px; }
.radio-val { width: 106px; }

.value-input {
    width: 172px;
    height: 20px;
    padding-left: 4px;
    border: 1px solid #c8c8c8;
    background-color: #ececec;
    color: #888;
    line-height: 17px;
}

.lbl-vars {
    margin-top: 15px;
}

.ref-vars {
    margin-top: 3px;
}

.ref-vars .ref-text {
    line-height: 19px;
}

.lbl-subject {
    margin-top: 14px;
}

.row-constraints {
    display: flex;
    gap: 7px;
    height: 163px;
    margin-top: 4px;
}

.listbox {
    display: flex;
    justify-content: space-between;
    width: 348px;
    height: 162px;
    padding: 1px;
    background-color: #fff;
    border: 1px solid #ababab;
}

.list-items {
    flex: 1;
    margin: 0;
    padding: 0;
    list-style-type: none;
    line-height: 12px;
}

.list-items li {
    height: 12px;
    padding-left: 2px;
}

.list-items .selected {
    background-color: #0078d7;
    color: #fff;
}

.list-scroll {
    display: flex;
    flex-direction: column;
    align-items: center;
    justify-content: space-between;
    width: 16px;
    padding: 6px 0;
}

.side-btns {
    display: flex;
    flex-direction: column;
    width: 130px;
    padding-top: 1px;
}

.btn {
    flex: none;
    height: 24px;
    padding: 0 0 1px;
    background-color: #e1e1e1;
    border: 1px solid #adadad;
    font-size: 10.3px;
    color: #333;
}

.side-btns .btn {
    margin-bottom: 9px;
    padding-bottom: 3px;
}

.side-btns .btn-gap {
    margin-top: 7px;
}

.check-row {
    display: flex;
    align-items: center;
    gap: 3px;
    height: 14px;
    margin: 4px 0 0 4px;
}

.checkbox {
    display: flex;
    align-items: center;
    justify-content: center;
    width: 14px;
    height: 14px;
    background-color: #fff;
    border: 1px solid #555;
}

.row-method {
    display: flex;
    align-items: flex-start;
    height: 25px;
    margin-top: 9px;
}

.lbl-method {
    width: 98px;
    padding-top: 3px;
    line-height: 12px;
}

.select {
    display: flex;
    justify-content: space-between;
    width: 270px;
    height: 20px;
    padding-left: 4px;
    background-color: #fff;
    line-height: 20px;
}

.select-btn {
    display: flex;
    align-items: center;
    justify-content: center;
    width: 17px;
    background-color: #f0f0f0;
    border: 1px solid #ababab;
}

.btn-options {
    width: 110px;
    margin: 1px 0 0 7px;
}

.method-box {
    width: 478px;
    height: 70px;
    margin-top: 21px;
    padding: 2px 0 0 8px;
    border: 1px solid #e0e0e0;
}

.method-title {
    line-height: 12px;
}

.method-text {
    margin: 8px 0 0;
    line-height: 12px;
}

.dialog-footer {
    display: flex;
    gap: 16px;
    margin: 9px 13px 0 14px;
}

.btn-foot {
    width: 103px;
    height: 25px;
}

.btn-foot:first-child {
    margin-right: auto;
}

.btn-default {
    border: 2px solid #0078d7;
}
```

FILE: script.js
```js
// Worksheet content, keyed by column letter + row number
const columns = ['A', 'B', 'C', 'D', 'E', 'F', 'G', 'H', 'I', 'J', 'K', 'L', 'M', 'N', 'O'];

const cells = {
    A16: { text: 'H', cls: 'c-label c-edge' },
    A17: { text: 'H', cls: 'c-label c-edge' },
    G15: { text: 'Panes', cls: 'c-panes' },
    H15: { text: 'Pan Simple', cls: 'c-h-blue' },
    I15: { text: 'Pan Premiun', cls: 'c-h-blue' },
    G16: { text: 'Precio', cls: 'c-label' },
    H16: { text: '20', cls: 'c-in' },
    I16: { text: '30', cls: 'c-in' },
    K16: { text: '', cls: 'active' },
    G17: { text: 'Unidades', cls: 'c-label' },
    H17: { text: '2', cls: 'c-yellow' },
    I17: { text: '3', cls: 'c-yellow' },
    J17: { text: '5', cls: 'c-plain-yellow' },
    M17: { text: 'Restricciones', cls: 'c-red', span: 2 },
    G18: { text: 'Harina de trigo', cls: 'c-label' },
    H18: { text: '1', cls: 'c-in' },
    I18: { text: '3', cls: 'c-in' },
    J18: { text: '11', cls: 'c-num' },
    M18: { text: '<=', cls: 'c-in c-sign' },
    N18: { text: '100', cls: 'c-in' },
    G19: { text: 'Harina de maíz', cls: 'c-label' },
    H19: { text: '2', cls: 'c-in' },
    I19: { text: '3', cls: 'c-in' },
    J19: { text: '13', cls: 'c-num' },
    M19: { text: '<=', cls: 'c-in c-sign' },
    N19: { text: '150', cls: 'c-in' },
    G20: { text: 'Ingreso Máx.', cls: 'c-label' },
    H20: { text: '130', cls: 'c-gray', span: 2 }
};

// Rows 4 to 12 are one merged block (A:J), the dialog sits on top of it
const noteRows = {
    6: { frag: '1', html: 'brica 2 tipos de panes: Pan simple (Para 1 kg de pan simple se' },
    7: { frag: 'e', html: 'mplea 3 kg de cada uno de los tipos de harinas). El precio por Kg del' },
    8: { frag: 'p', html: '<span class="note-red">ogramos</span> por tipo de pan deberá fabricar para máximizar el ingreso por' },
    9: { frag: 'la', html: '' },
    10: { frag: '2', html: 'el link' }
};

function createCell(name) {
    const td = document.createElement('td');
    const cell = cells[name];
    if (cell) {
        td.textContent = cell.text;
        td.className = cell.cls;
        if (cell.span) td.colSpan = cell.span;
    }
    return td;
}

function createHeaderRow() {
    const tr = document.createElement('tr');
    const corner = document.createElement('th');
    corner.className = 'col-head corner';
    tr.appendChild(corner);
    columns.forEach((col, i) => {
        const th = document.createElement('th');
        th.className = col === 'K' ? 'col-head col-head-active' : 'col-head';
        // A to E are behind the dialog
        th.textContent = i < 5 ? '' : col;
        tr.appendChild(th);
    });
    return tr;
}

function createRow(row) {
    const tr = document.createElement('tr');
    tr.className = `row-${row}`;

    const head = document.createElement('th');
    head.className = row === 16 ? 'row-head row-head-active' : 'row-head';
    head.textContent = row;
    tr.appendChild(head);

    let startCol = 0;
    if (row === 1) {
        const td = document.createElement('td');
        td.className = 'banner';
        td.colSpan = 10;
        td.rowSpan = 2;
        td.innerHTML = '<span class="banner-text">X</span>';
        tr.appendChild(td);
        startCol = 10;
    } else if (row === 2) {
        startCol = 10;
    } else if (row >= 4 && row <= 12) {
        const td = document.createElement('td');
        td.className = 'note';
        td.colSpan = 10;
        const note = noteRows[row];
        if (note) {
            td.innerHTML = `<div class="note-row"><span class="note-frag">${note.frag}</span><span>${note.html}</span></div>`;
        }
        tr.appendChild(td);
        startCol = 10;
    }

    for (let i = startCol; i < columns.length; i++) {
        const name = columns[i] + row;
        tr.appendChild(createCell(name));
        if (cells[name] && cells[name].span) i += cells[name].span - 1;
    }
    return tr;
}

const body = document.getElementById('grid-body');
body.appendChild(createHeaderRow());
for (let row = 1; row <= 28; row++) {
    body.appendChild(createRow(row));
}
```
